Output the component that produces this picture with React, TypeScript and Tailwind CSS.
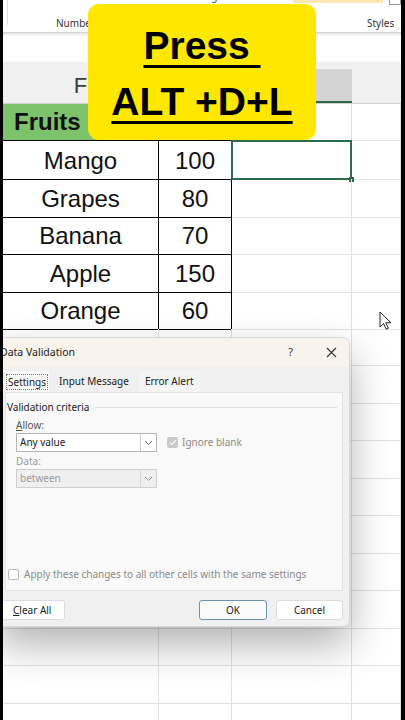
import React from "react";

const rows = [
  { name: "Mango", qty: "100" },
  { name: "Grapes", qty: "80" },
  { name: "Banana", qty: "70" },
  { name: "Apple", qty: "150" },
  { name: "Orange", qty: "60" },
];

const cols = "grid grid-cols-[156px_73px_120px_49px]";
const gridCell = "border-r border-b border-[#e1e1e1]";

function Chevron({ muted = false }: { muted?: boolean }) {
  return (
    <svg width="9" height="6" viewBox="0 0 9 6" className={muted ? "text-[#9a9a9a]" : "text-[#666]"}>
      <path d="M1 1l3.5 3.5L8 1" fill="none" stroke="currentColor" strokeWidth="1" />
    </svg>
  );
}

function Select({ value, disabled = false }: { value: string; disabled?: boolean }) {
  return (
    <div
      className={`flex h-[19px] w-[141px] items-stretch border ${
        disabled ? "border-[#cfcfcf] bg-[#efefef] text-[#9a9a9a]" : "border-[#b5b5b5] bg-white text-[#222]"
      }`}
    >
      <span className="flex-1 pl-[3px] text-[10px] leading-[17px]">{value}</span>
      <span className={`flex w-[16px] items-center justify-center border-l ${disabled ? "border-[#d6d6d6]" : "border-[#cfcfcf]"}`}>
        <Chevron muted={disabled} />
      </span>
    </div>
  );
}

function DataValidation() {
  return (
    <div className="absolute left-[-4px] top-[337px] z-10 h-[290px] w-[354px] overflow-hidden rounded-[7px] border border-[#d8d8d8] bg-[#f0f0f0] font-['Noto_Sans',sans-serif] text-[#222] shadow-[0_18px_40px_rgba(0,0,0,0.3)]">
      <div className="flex h-[29px] items-center bg-[#f8f3ed] pl-[3px] pr-[12px]">
        <span className="flex-1 text-[10.5px]">Data Validation</span>
        <span className="mr-[33px] text-[11px] text-[#333]">?</span>
        <svg width="11" height="11" viewBox="0 0 11 11">
          <path d="M1 1l9 9M10 1l-9 9" stroke="#333" strokeWidth="1.1" />
        </svg>
      </div>
      <div className="flex h-[25px] items-end pl-[8px] pt-[4px] text-[10px]">
        <div className="flex h-[21px] items-center bg-[#f9f9f9] px-[1px]">
          <span className="border border-dotted border-[#777] px-[1px] leading-[14px]">Settings</span>
        </div>
        <div className="flex h-[21px] items-center px-[10px]">Input Message</div>
        <div className="flex h-[21px] items-center bg-[#f4f4f4] px-[6px]">Error Alert</div>
      </div>
      <div className="ml-[8px] flex h-[199px] w-[338px] flex-col border border-[#e3e3e3] bg-[#f9f9f9] text-[10px]">
        <div className="mt-[7px] flex items-center pl-[1px] pr-[5px]">
          <span>Validation criteria</span>
          <span className="ml-[6px] h-px flex-1 bg-[#dcdcdc]" />
        </div>
        <div className="ml-[10px] mt-[3px] text-[#555]">
          <span className="underline">A</span>llow:
        </div>
        <div className="ml-[10px] flex items-center">
          <Select value="Any value" />
          <span className="ml-[10px] flex h-[11px] w-[11px] items-center justify-center rounded-[2px] bg-[#c9c9c9]">
            <svg width="8" height="7" viewBox="0 0 8 7">
              <path d="M1 3.5l2 2L7 1" fill="none" stroke="#f5f5f5" strokeWidth="1.2" />
            </svg>
          </span>
          <span className="ml-[4px] text-[#8c8c8c]">Ignore blank</span>
        </div>
        <div className="ml-[10px] mt-[2px] text-[#9a9a9a]">Data:</div>
        <div className="ml-[10px]">
          <Select value="between" disabled />
        </div>
        <div className="mt-auto mb-[8px] ml-[2px] flex items-center">
          <span className="h-[11px] w-[11px] rounded-[2px] border border-[#b8b8b8] bg-white" />
          <span className="ml-[5px] text-[10px] text-[#8a8a8a]">Apply these changes to all other cells with the same settings</span>
        </div>
      </div>
      <div className="mt-[9px] flex items-center pr-[6px] text-[10px]">
        <button className="ml-[2px] h-[20px] w-[66px] rounded-[3px] border border-[#dcdcdc] bg-white pl-[13px] text-left">
          <span className="underline">C</span>lear All
        </button>
        <button className="ml-auto h-[20px] w-[68px] rounded-[3px] border-[1.5px] border-[#6b93b5] bg-[#fbfbfb]">OK</button>
        <button className="ml-[9px] h-[20px] w-[67px] rounded-[3px] border border-[#dcdcdc] bg-white">Cancel</button>
      </div>
    </div>
  );
}

export default function App() {
  const emptyRows = Array.from({ length: 11 });
  return (
    <div className="relative flex h-[720px] w-[405px] overflow-hidden bg-white">
      <div className="relative z-30 w-[3px] shrink-0 bg-black" />
      <div className="w-[398px] shrink-0">
        {/* ribbon */}
        <div className="relative h-[33px] border-b border-[#d6d6d6] font-['Noto_Sans',sans-serif] text-[10px] text-[#333]">
          <div className="absolute left-[4px] top-0 h-[25px] w-px bg-[#dedede]" />
          <div className="absolute left-[162px] top-[-11px] text-[#444]">Formatting ▾</div>
          <div className="absolute left-[240px] top-[-11px] text-[#444]">Table ▾</div>
          <div className="absolute left-[290px] top-0 h-[3px] w-[90px] bg-[#fbe7b0]" />
          <div className="absolute left-[386px] top-[-4px] h-[9px] w-[12px] border border-[#999] bg-white" />
          <div className="absolute left-[53px] top-[16px]">Number</div>
          <div className="absolute left-[364px] top-[16px]">Styles</div>
        </div>
        <div className="h-[4px] bg-gradient-to-b from-[#e6e6e6] to-white" />
        <div className="h-[25px]" />
        {/* column headers */}
        <div className={`${cols} h-[42px] border-b border-[#d0d0d0] bg-[#f0f0f0] font-['Liberation_Sans',sans-serif] text-[22px] font-light text-[#3c3c3c]`}>
          <div className="flex items-end justify-center border-r border-[#e2e2e2] pb-[1px]">F</div>
          <div className="border-r border-[#e2e2e2]" />
          <div className="mt-[7px] border-b-2 border-[#2f6a4c] bg-[#d4d4d4]" />
          <div />
        </div>
        {/* title row */}
        <div className={`${cols} h-[37px] font-['Liberation_Sans',sans-serif] text-[24px]`}>
          <div className="col-span-2 flex items-center border-b border-r border-black bg-[#7cc36b] pl-[11px] font-bold text-[#111]">
            Fruits List
          </div>
          <div className={gridCell} />
          <div className={gridCell} />
        </div>
        {/* data rows */}
        {rows.map((r, i) => (
          <div key={r.name} className={`${cols} h-[37.6px] font-['Liberation_Sans',sans-serif] text-[24px] text-[#111]`}>
            <div className="flex items-center justify-center border-b border-r border-black pt-[2px]">{r.name}</div>
            <div className="flex items-center justify-center border-b border-r border-black pt-[2px]">{r.qty}</div>
            <div className={`relative ${gridCell}`}>
              {i === 0 && (
                <>
                  <div className="absolute inset-[-1px] border-2 border-[#2f6a4c]" />
                  <div className="absolute bottom-[-3px] right-[-3px] h-[5px] w-[5px] bg-[#2f6a4c]" />
                </>
              )}
            </div>
            <div className={gridCell} />
          </div>
        ))}
        {emptyRows.map((_, i) => (
          <div key={i} className={`${cols} h-[37.5px]`}>
            <div className={gridCell} />
            <div className={gridCell} />
            <div className={gridCell} />
            <div className={gridCell} />
          </div>
        ))}
      </div>
      <div className="relative z-30 w-[4px] shrink-0 bg-black" />

      <DataValidation />

      {/* keyboard hint */}
      <div className="absolute left-[88px] top-[4px] z-20 flex h-[136px] w-[228px] flex-col items-center rounded-[11px] bg-[#ffe700] font-['Liberation_Sans',sans-serif] text-[39px] font-bold leading-[56px] text-black">
        <span className="mt-[14px] whitespace-pre underline decoration-[3px] underline-offset-[6px]">Press </span>
        <span className="whitespace-pre underline decoration-[3px] underline-offset-[6px]">ALT +D+L</span>
      </div>

      {/* mouse pointer */}
      <svg className="absolute left-[379px] top-[311px] z-20" width="13" height="19" viewBox="0 0 13 19">
        <path d="M1 1v15l3.6-3.4 2.6 5.6 2.2-1-2.6-5.4H12z" fill="white" stroke="#222" strokeWidth="1" strokeLinejoin="round" />
      </svg>
    </div>
  );
}
